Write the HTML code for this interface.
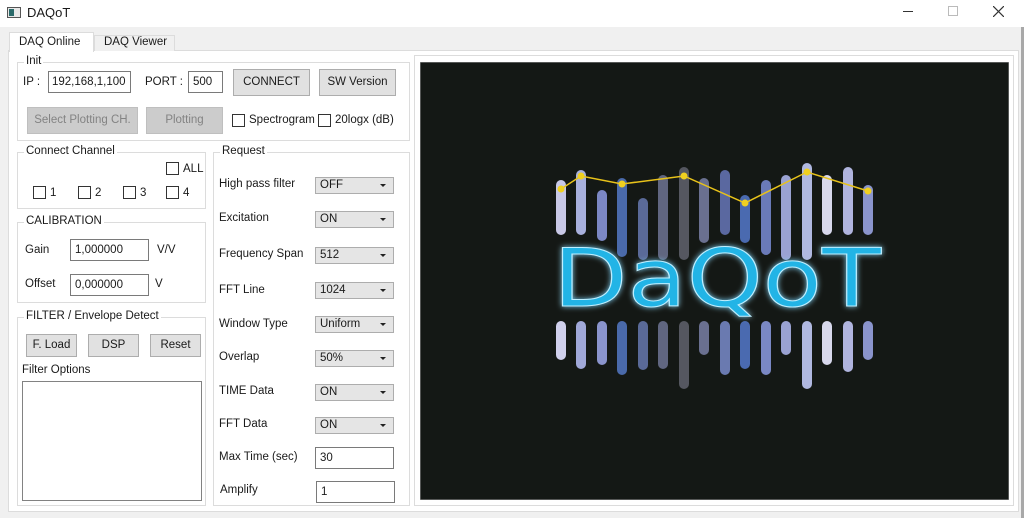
<!DOCTYPE html>
<html><head><meta charset="utf-8"><style>
*{margin:0;padding:0;box-sizing:border-box}
body{width:1024px;height:518px;background:#f0f0f0;font-family:"Liberation Sans","Noto Sans CJK KR",sans-serif;font-size:11.5px;color:#1a1a1a;position:relative;overflow:hidden}
.a{position:absolute}
.gb{position:absolute;border:1px solid #dcdcdc;}
.gb>.t{position:absolute;top:-8px;left:6px;background:#fff;padding:0 2px;font-size:11.5px}
.btn{position:absolute;background:#e1e1e1;border:1px solid #adadad;text-align:center;font-size:11.5px}
.dis{background:#cccccc;border-color:#bfbfbf;color:#838383}
.tb{position:absolute;background:#fff;border:1px solid #7a7a7a;padding-left:4px;font-size:11.5px}
.cb{position:absolute;width:13px;height:13px;border:1px solid #333;background:#fff}
.cmb{position:absolute;width:79px;height:17px;background:#e5e5e5;border:1px solid #adadad;padding-left:4px;font-size:11.5px;line-height:15px}
.cmb:after{content:"";position:absolute;right:7px;top:6px;border-left:3px solid transparent;border-right:3px solid transparent;border-top:3px solid #222}
.lb{position:absolute;font-size:11.5px}
</style></head><body>
<div class="a" style="left:0;top:0;width:1024px;height:27px;background:#fff"></div>
<div class="a" style="left:7px;top:7px;width:14px;height:11px;border:1px solid #555;background:#e8e8e8"><div class="a" style="left:1px;top:1px;width:5px;height:7px;background:#2a6a6a"></div></div>
<div class="lb" style="left:27px;top:5px;font-size:13px">DAQoT</div>
<div class="a" style="left:903px;top:11px;width:10px;height:1px;background:#333"></div>
<div class="a" style="left:948px;top:6px;width:10px;height:10px;border:1px solid #bbb"></div>
<svg class="a" style="left:993px;top:6px" width="11" height="11"><path d="M0 0L11 11M11 0L0 11" stroke="#333" stroke-width="1.2"/></svg>
<div class="a" style="left:1021px;top:27px;width:3px;height:491px;background:#a8a8a8"></div>
<div class="a" style="left:8px;top:50px;width:1011px;height:462px;background:#fff;border:1px solid #dcdcdc"></div>
<div class="a" style="left:9px;top:32px;width:85px;height:20px;background:#fff;border:1px solid #dcdcdc;border-bottom:none"></div>
<div class="lb" style="left:19px;top:36px">DAQ Online</div>
<div class="a" style="left:94px;top:35px;width:81px;height:16px;background:#f0f0f0;border:1px solid #dcdcdc;border-bottom:none"></div>
<div class="lb" style="left:104px;top:36px">DAQ Viewer</div>
<div class="gb" style="left:17px;top:62px;width:393px;height:79px"><span class="t">Init</span></div>
<div class="lb" style="left:23px;top:76px">IP :</div>
<div class="tb" style="left:48px;top:71px;width:83px;height:22px;line-height:20px;padding-left:3px">192,168,1,100</div>
<div class="lb" style="left:145px;top:76px">PORT :</div>
<div class="tb" style="left:188px;top:71px;width:35px;height:22px;line-height:20px">500</div>
<div class="btn" style="left:233px;top:69px;width:77px;height:27px;line-height:25px">CONNECT</div>
<div class="btn" style="left:319px;top:69px;width:77px;height:27px;line-height:25px">SW Version</div>
<div class="btn dis" style="left:27px;top:107px;width:111px;height:27px;line-height:25px">Select Plotting CH.</div>
<div class="btn dis" style="left:146px;top:107px;width:77px;height:27px;line-height:25px">Plotting</div>
<div class="cb" style="left:232px;top:114px"></div><div class="lb" style="left:249px;top:114px">Spectrogram</div>
<div class="cb" style="left:318px;top:114px"></div><div class="lb" style="left:335px;top:114px">20logx (dB)</div>
<div class="gb" style="left:17px;top:152px;width:189px;height:57px"><span class="t">Connect Channel</span></div>
<div class="cb" style="left:166px;top:162px"></div><div class="lb" style="left:183px;top:163px">ALL</div>
<div class="cb" style="left:33px;top:186px"></div><div class="lb" style="left:50px;top:187px">1</div>
<div class="cb" style="left:78px;top:186px"></div><div class="lb" style="left:95px;top:187px">2</div>
<div class="cb" style="left:123px;top:186px"></div><div class="lb" style="left:140px;top:187px">3</div>
<div class="cb" style="left:166px;top:186px"></div><div class="lb" style="left:183px;top:187px">4</div>
<div class="gb" style="left:17px;top:222px;width:189px;height:81px"><span class="t">CALIBRATION</span></div>
<div class="lb" style="left:25px;top:244px">Gain</div>
<div class="tb" style="left:70px;top:239px;width:79px;height:22px;line-height:20px">1,000000</div>
<div class="lb" style="left:157px;top:244px">V/V</div>
<div class="lb" style="left:25px;top:278px">Offset</div>
<div class="tb" style="left:70px;top:274px;width:79px;height:22px;line-height:20px">0,000000</div>
<div class="lb" style="left:155px;top:278px">V</div>
<div class="gb" style="left:17px;top:317px;width:189px;height:189px"><span class="t">FILTER / Envelope Detect</span></div>
<div class="btn" style="left:26px;top:334px;width:51px;height:23px;line-height:21px">F. Load</div>
<div class="btn" style="left:88px;top:334px;width:51px;height:23px;line-height:21px">DSP</div>
<div class="btn" style="left:150px;top:334px;width:51px;height:23px;line-height:21px">Reset</div>
<div class="lb" style="left:22px;top:364px">Filter Options</div>
<div class="a" style="left:22px;top:381px;width:180px;height:120px;border:1px solid #828282;background:#fff"></div>
<div class="gb" style="left:213px;top:152px;width:197px;height:354px"><span class="t">Request</span></div>
<div class="lb" style="left:219px;top:178px">High pass filter</div><div class="cmb" style="left:315px;top:177px">OFF</div>
<div class="lb" style="left:219px;top:212px">Excitation</div><div class="cmb" style="left:315px;top:211px">ON</div>
<div class="lb" style="left:219px;top:248px">Frequency Span</div><div class="cmb" style="left:315px;top:247px">512</div>
<div class="lb" style="left:219px;top:284px">FFT Line</div><div class="cmb" style="left:315px;top:282px">1024</div>
<div class="lb" style="left:219px;top:318px">Window Type</div><div class="cmb" style="left:315px;top:316px">Uniform</div>
<div class="lb" style="left:219px;top:351px">Overlap</div><div class="cmb" style="left:315px;top:350px">50%</div>
<div class="lb" style="left:219px;top:385px">TIME Data</div><div class="cmb" style="left:315px;top:384px">ON</div>
<div class="lb" style="left:219px;top:418px">FFT Data</div><div class="cmb" style="left:315px;top:417px">ON</div>
<div class="lb" style="left:219px;top:451px">Max Time (sec)</div>
<div class="tb" style="left:315px;top:447px;width:79px;height:22px;line-height:20px">30</div>
<div class="lb" style="left:220px;top:484px">Amplify</div>
<div class="tb" style="left:316px;top:481px;width:79px;height:22px;line-height:20px">1</div>
<div class="a" style="left:414px;top:55px;width:600px;height:451px;border:1px solid #dcdcdc;background:#fff"></div>
<svg class="a" style="left:420px;top:62px" width="589" height="438" viewBox="420 62 589 438">
<defs><filter id="g" x="-20%" y="-30%" width="140%" height="160%"><feGaussianBlur stdDeviation="3" result="b"/><feMerge><feMergeNode in="b"/><feMergeNode in="SourceGraphic"/></feMerge></filter></defs>
<rect x="420" y="62" width="589" height="438" fill="#141815" stroke="#999" stroke-width="1"/>
<g stroke-linecap="round" stroke-width="10">
<line x1="561" y1="185" x2="561" y2="230" stroke="#c8c8e6"/>
<line x1="581" y1="175" x2="581" y2="230" stroke="#a8b0dc"/>
<line x1="602" y1="195" x2="602" y2="236" stroke="#7c88c4"/>
<line x1="622" y1="183" x2="622" y2="252" stroke="#4a6aaa"/>
<line x1="643" y1="203" x2="643" y2="255" stroke="#5a6a98"/>
<line x1="663" y1="180" x2="663" y2="255" stroke="#606680"/>
<line x1="684" y1="172" x2="684" y2="255" stroke="#555760"/>
<line x1="704" y1="183" x2="704" y2="238" stroke="#6a7090"/>
<line x1="725" y1="175" x2="725" y2="230" stroke="#5a68a0"/>
<line x1="745" y1="200" x2="745" y2="238" stroke="#4a6ab0"/>
<line x1="766" y1="185" x2="766" y2="250" stroke="#6a7ab8"/>
<line x1="786" y1="180" x2="786" y2="255" stroke="#9aa2d2"/>
<line x1="807" y1="168" x2="807" y2="255" stroke="#b0b8e0"/>
<line x1="827" y1="180" x2="827" y2="230" stroke="#d8d8ec"/>
<line x1="848" y1="172" x2="848" y2="230" stroke="#b0b4de"/>
<line x1="868" y1="190" x2="868" y2="230" stroke="#8a94cc"/>
<line x1="561" y1="326" x2="561" y2="355" stroke="#d0d0ec"/>
<line x1="581" y1="326" x2="581" y2="364" stroke="#a0a8d8"/>
<line x1="602" y1="326" x2="602" y2="360" stroke="#8a94cc"/>
<line x1="622" y1="326" x2="622" y2="370" stroke="#4a6aaa"/>
<line x1="643" y1="326" x2="643" y2="365" stroke="#5a6a98"/>
<line x1="663" y1="326" x2="663" y2="364" stroke="#606680"/>
<line x1="684" y1="326" x2="684" y2="384" stroke="#555760"/>
<line x1="704" y1="326" x2="704" y2="350" stroke="#6a7090"/>
<line x1="725" y1="326" x2="725" y2="370" stroke="#6a7ab0"/>
<line x1="745" y1="326" x2="745" y2="364" stroke="#4a6ab0"/>
<line x1="766" y1="326" x2="766" y2="370" stroke="#7a88c4"/>
<line x1="786" y1="326" x2="786" y2="350" stroke="#9aa2d2"/>
<line x1="807" y1="326" x2="807" y2="384" stroke="#b0b8e0"/>
<line x1="827" y1="326" x2="827" y2="360" stroke="#d8d8ec"/>
<line x1="848" y1="326" x2="848" y2="367" stroke="#b0b4de"/>
<line x1="868" y1="326" x2="868" y2="355" stroke="#8a94cc"/>
</g>
<polyline points="561,189 581,176 622,184 684,176 745,203 807,172 868,191" fill="none" stroke="#e8c21a" stroke-width="1.5"/>
<g fill="#f0d020"><circle cx="561" cy="189" r="3.5"/><circle cx="581" cy="176" r="3.5"/><circle cx="622" cy="184" r="3.5"/><circle cx="684" cy="176" r="3.5"/><circle cx="745" cy="203" r="3.5"/><circle cx="807" cy="172" r="3.5"/><circle cx="868" cy="191" r="3.5"/></g>
<text x="553" y="306" font-family="DejaVu Sans, sans-serif" font-size="80" textLength="328" lengthAdjust="spacingAndGlyphs" fill="#22b4e6" stroke="#bfefff" stroke-width="1" filter="url(#g)">DaQoT</text>
</svg>
</body></html>
